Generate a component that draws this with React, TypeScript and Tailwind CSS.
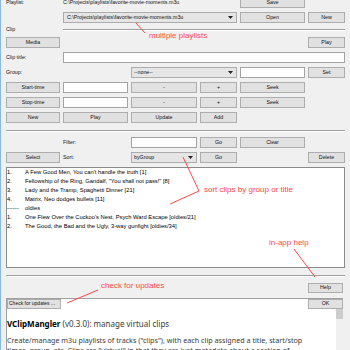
const COLS = "grid grid-cols-[54px_65px_66px_37px_65px_37px] gap-x-[3px] h-[11px]";

function Btn({ label, className = "" }: { label: string; className?: string }) {
  return (
    <div className={`flex items-center justify-center bg-[#e1e1e1] border border-[#adadad] ${className}`}>
      {label}
    </div>
  );
}

function Field({ className = "" }: { className?: string }) {
  return <div className={`bg-white border border-[#a3a3a3] ${className}`} />;
}

function Combo({ text, className = "" }: { text: string; className?: string }) {
  return (
    <div className={`flex items-center justify-between bg-[#e5e5e5] border border-[#acacac] pl-[2px] pr-[3px] ${className}`}>
      <span>{text}</span>
      <svg width="5" height="3" viewBox="0 0 5 3">
        <polygon points="0,0 5,0 2.5,3" fill="#222" />
      </svg>
    </div>
  );
}

function Label({ text, className = "" }: { text: string; className?: string }) {
  return <div className={`flex items-center ${className}`}>{text}</div>;
}

const clips: [string, string][] = [
  ["1.", "A Few Good Men, You can't handle the truth [1]"],
  ["2.", 'Fellowship of the Ring, Gandalf, "You shall not pass!" [8]'],
  ["3.", "Lady and the Tramp, Spaghetti Dinner [21]"],
  ["4.", "Matrix, Neo dodges bullets [11]"],
  ["------", "oldies"],
  ["1.", "One Flew Over the Cuckoo's Nest, Psych Ward Escape [oldies/21]"],
  ["2.", "The Good, the Bad and the Ugly, 3-way gunfight [oldies/34]"],
];

export default function App() {
  return (
    <div className="relative w-[350px] h-[350px] overflow-hidden bg-[#f0f0f0] border-l border-[#86b8e8] font-['Liberation_Sans',Arial,sans-serif] text-[5.3px] text-[#111]">
      <div className="flex flex-col pl-[5px] -mt-[3px]">
        {/* playlist */}
        <div className={COLS}>
          <Label text="Playlist:" />
          <Label text="C:\Projects\playlists\favorite-movie-moments.m3u" className="col-span-3" />
          <Btn label="Save" />
        </div>
        <div className={`${COLS} mt-[4px]`}>
          <Combo text="C:\Projects\playlists\favorite-movie-moments.m3u" className="col-start-2 col-span-3 pl-[3px]" />
          <Btn label="Open" />
          <Btn label="New" />
        </div>

        {/* clip */}
        <div className="flex items-center h-[6px] mt-[4px] w-[339px]">
          <span className="w-[57px]">Clip</span>
          <div className="flex-1 border-t border-t-[#a0a0a0] border-b border-b-white" />
        </div>
        <div className={`${COLS} mt-[4px]`}>
          <Btn label="Media" />
          <Btn label="Play" className="col-start-6" />
        </div>
        <div className={`${COLS} mt-[4px]`}>
          <Label text="Clip title:" />
          <Field className="col-span-5" />
        </div>
        <div className={`${COLS} mt-[4px]`}>
          <Label text="Group:" />
          <Combo text="--none--" className="col-start-3 col-span-2" />
          <Field />
          <Btn label="Set" />
        </div>
        <div className={`${COLS} mt-[4px]`}>
          <Btn label="Start-time" />
          <Field />
          <Btn label="-" />
          <Btn label="+" />
          <Btn label="Seek" />
        </div>
        <div className={`${COLS} mt-[4px]`}>
          <Btn label="Stop-time" />
          <Field />
          <Btn label="-" />
          <Btn label="+" />
          <Btn label="Seek" />
        </div>
        <div className={`${COLS} mt-[4px]`}>
          <Btn label="New" />
          <Btn label="Play" />
          <Btn label="Update" />
          <Btn label="Add" />
        </div>

        <div className="mt-[7px] w-[339px] border-t border-t-[#a0a0a0] border-b border-b-white" />

        {/* filter / sort */}
        <div className={`${COLS} mt-[5px]`}>
          <Label text="Filter:" className="col-start-2" />
          <Field />
          <Btn label="Go" />
          <Btn label="Clear" />
        </div>
        <div className={`${COLS} mt-[4px]`}>
          <Btn label="Select" />
          <Label text="Sort:" />
          <Combo text="byGroup" />
          <Btn label="Go" />
          <Btn label="Delete" className="col-start-6" />
        </div>

        {/* clip list */}
        <div className="mt-[4px] w-[339px] h-[101px] bg-white border border-[#8a8a8a] text-[5.8px] text-black">
          {clips.map(([n, t], i) => (
            <div key={i} className="flex items-center h-[9px]">
              <span className="w-[18px]">{n}</span>
              <span>{t}</span>
            </div>
          ))}
        </div>

        <div className="mt-[7px] w-[339px] border-t border-t-[#a0a0a0] border-b border-b-white" />

        <div className="flex justify-end w-[339px] mt-[6px]">
          <Btn label="Help" className="w-[35px] h-[10px] mr-[2px]" />
        </div>

        {/* help view */}
        <div className="mt-[5px] w-[337px] h-[60px] bg-white border-l border-t border-[#a0a0a0] flex flex-col">
          <div className="flex justify-between h-[10px]">
            <div className="flex items-center w-[54px] h-[10px] bg-[#e1e1e1] border border-[#adadad] pl-[1px] text-[5px]">
              Check for updates ...
            </div>
            <Btn label="OK" className="w-[35px] h-[10px]" />
          </div>
          <div className="flex flex-1">
            <div className="flex-1 font-['Noto_Sans',sans-serif] text-[#3a3a3a]">
              <div className="mt-[10px] text-[8px] leading-[10px]">
                <span className="font-bold text-black">VClipMangler</span> (v0.3.0): manage virtual clips
              </div>
              <div className="mt-[7px] text-[7.2px] leading-[9.5px] whitespace-nowrap">
                Create/manage m3u playlists of tracks ("clips"), with each clip assigned a title, start/stop
                <br />
                times, group, etc. Clips are "virtual" in that they are just metadata about a section of
              </div>
            </div>
            <div className="w-[7px] bg-[#f0f0f0]">
              <div className="h-[10px] bg-[#cdcdcd]" />
            </div>
          </div>
        </div>
      </div>

      {/* annotations */}
      <div className="absolute left-[148px] top-[32px] text-[8px] leading-[8px] text-[#ff4848] font-['Liberation_Sans',sans-serif]">multiple playlists</div>
      <div className="absolute left-[203px] top-[186px] text-[8px] leading-[8px] text-[#ff4848] font-['Liberation_Sans',sans-serif]">sort clips by group or title</div>
      <div className="absolute left-[268px] top-[239px] text-[8px] leading-[8px] text-[#ff4848] font-['Liberation_Sans',sans-serif]">in-app help</div>
      <div className="absolute left-[100px] top-[282px] text-[8px] leading-[8px] text-[#ff4848] font-['Liberation_Sans',sans-serif]">check for updates</div>
      <svg className="absolute left-0 top-0 pointer-events-none" width="350" height="350">
        <g stroke="#ff4848" strokeWidth="1" fill="none">
          <line x1="135" y1="23" x2="144" y2="33" />
          <polyline points="182,157 198,191 169,204" />
          <line x1="293" y1="249" x2="314" y2="277" />
          <line x1="97" y1="290" x2="66" y2="303" />
        </g>
      </svg>
    </div>
  );
}
